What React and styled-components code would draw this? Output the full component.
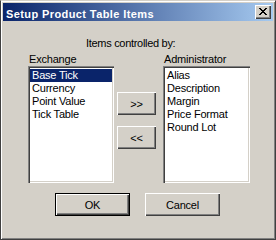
import styled, { createGlobalStyle, css } from "styled-components";

const GlobalStyle = createGlobalStyle`
  html, body {
    margin: 0;
    padding: 0;
    background: #d4d0c8;
  }

  body {
    font-family: "Liberation Sans", Arial, sans-serif;
    font-size: 11px;
    color: #000;
  }
`;

const raised = css`
  box-shadow: inset 1px 1px #fff, inset -1px -1px #404040,
    inset -2px -2px #808080;
`;

const Window = styled.div`
  width: 276px;
  height: 240px;
  box-sizing: border-box;
  background: #d4d0c8;
  border-top: 1px solid #d4d0c8;
  border-left: 1px solid #404040;
  border-right: 1px solid #404040;
  border-bottom: 1px solid #404040;
  box-shadow: inset 1px 1px #fff, inset -1px -1px #808080;
  padding: 2px;
  display: flex;
  flex-direction: column;
`;

const TitleBar = styled.div`
  height: 18px;
  flex: none;
  display: flex;
  justify-content: space-between;
  align-items: flex-start;
  padding: 0 2px 0 3px;
  background: linear-gradient(to right, #0a246a, #a6caf0);
`;

const TitleText = styled.span`
  margin-top: 5px;
  line-height: 13px;
  font-weight: bold;
  letter-spacing: 0.4px;
  color: #fff;
  white-space: nowrap;
`;

const CloseButton = styled.div`
  width: 16px;
  height: 14px;
  margin-top: 2px;
  box-sizing: border-box;
  padding: 3px 0 0 4px;
  background: #d4d0c8;
  ${raised}

  svg {
    display: block;
  }
`;

const Body = styled.div`
  display: flex;
  flex-direction: column;
  padding: 16px 0 0 25px;
`;

const Heading = styled.div`
  margin-left: 58px;
  line-height: 13px;
  letter-spacing: -0.3px;
  white-space: nowrap;
`;

const Columns = styled.div`
  display: flex;
  margin-top: 3px;
`;

const Column = styled.div`
  display: flex;
  flex-direction: column;
  width: ${(p) => p.$width}px;
`;

const Label = styled.div`
  line-height: 13px;
  padding-left: 1px;
  letter-spacing: -0.2px;
  white-space: nowrap;
`;

const ListBox = styled.div`
  height: 117px;
  box-sizing: border-box;
  padding: 3px 2px 2px;
  background: #fff;
  box-shadow: inset 1px 1px #808080, inset 2px 2px #404040,
    inset -1px -1px #fff, inset -2px -2px #d4d0c8;
`;

const ListItem = styled.div`
  line-height: 13px;
  padding-left: 2px;
  letter-spacing: -0.2px;
  white-space: nowrap;
  background: ${(p) => (p.$selected ? "#0a246a" : "transparent")};
  color: ${(p) => (p.$selected ? "#fff" : "#000")};
`;

const Middle = styled.div`
  display: flex;
  flex-direction: column;
  gap: 11px;
  padding-top: 39px;
  margin: 0 7px 0 3px;
`;

const Button = styled.button`
  width: ${(p) => p.$width}px;
  height: 23px;
  padding: 0;
  border: none;
  background: #d4d0c8;
  font: inherit;
  color: #000;
  letter-spacing: -0.2px;
  ${(p) =>
    p.$default
      ? css`
          box-shadow: inset 0 0 0 1px #000, inset 2px 2px #fff,
            inset -2px -2px #404040, inset -3px -3px #808080;
        `
      : raised}
`;

const Footer = styled.div`
  display: flex;
  gap: 15px;
  margin-top: 10px;
  padding-left: 27px;
`;

const CloseGlyph = () => (
  <svg width="8" height="7" viewBox="0 0 8 7" shapeRendering="crispEdges">
    <path
      fill="#000"
      d="M0 0h2v1H0zM6 0h2v1H6zM1 1h2v1H1zM5 1h2v1H5zM2 2h4v1H2zM3 3h2v1H3zM2 4h4v1H2zM1 5h2v1H1zM5 5h2v1H5zM0 6h2v1H0zM6 6h2v1H6z"
    />
  </svg>
);

const exchangeItems = ["Base Tick", "Currency", "Point Value", "Tick Table"];
const adminItems = ["Alias", "Description", "Margin", "Price Format", "Round Lot"];

const App = () => (
  <>
    <GlobalStyle />
    <Window>
      <TitleBar>
        <TitleText>Setup Product Table Items</TitleText>
        <CloseButton>
          <CloseGlyph />
        </CloseButton>
      </TitleBar>
      <Body>
        <Heading>Items controlled by:</Heading>
        <Columns>
          <Column $width={86}>
            <Label>Exchange</Label>
            <ListBox>
              {exchangeItems.map((item, i) => (
                <ListItem key={item} $selected={i === 0}>
                  {item}
                </ListItem>
              ))}
            </ListBox>
          </Column>
          <Middle>
            <Button $width={39}>&gt;&gt;</Button>
            <Button $width={39}>&lt;&lt;</Button>
          </Middle>
          <Column $width={87}>
            <Label>Administrator</Label>
            <ListBox>
              {adminItems.map((item) => (
                <ListItem key={item}>{item}</ListItem>
              ))}
            </ListBox>
          </Column>
        </Columns>
        <Footer>
          <Button $width={75} $default>
            OK
          </Button>
          <Button $width={75}>Cancel</Button>
        </Footer>
      </Body>
    </Window>
  </>
);

export default App;
